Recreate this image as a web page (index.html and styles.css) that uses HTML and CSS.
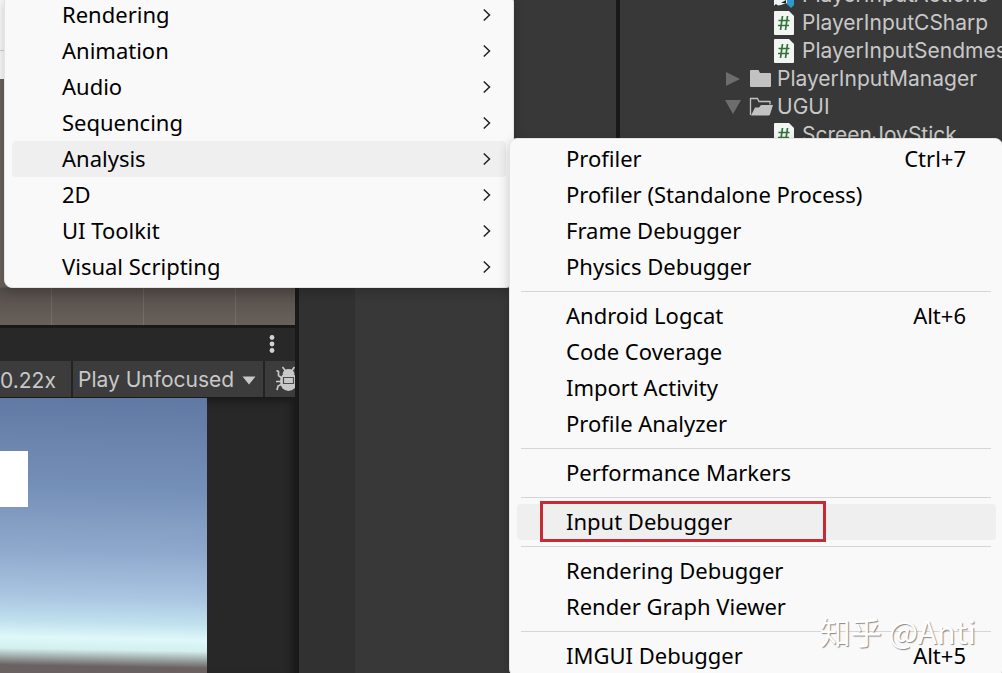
FILE: index.html
```html
<!DOCTYPE html>
<html lang="en">
<head>
<meta charset="utf-8">
<title>Unity Editor</title>
<link rel="stylesheet" href="styles.css">
</head>
<body>
<svg class="symbols" aria-hidden="true">
  <symbol id="chevron" viewBox="0 0 8 14"><path d="M.8 1.500L6.500 7 .8 12.500" fill="none" stroke="#222" stroke-width="1.500"/></symbol>
  <symbol id="script" viewBox="0 0 22 26">
    <path d="M2 1h14l5 5v18a1 1 0 0 1-1 1H2a1 1 0 0 1-1-1V2a1 1 0 0 1 1-1z" fill="#f2f5f2"/>
    <path d="M9.500 6L7.500 20M14.500 6L12.500 20M5.500 10.500h11M5 15.500h11" fill="none" stroke="#2f7338" stroke-width="1.700"/>
  </symbol>
  <symbol id="folder" viewBox="0 0 24 20"><path d="M2 1h7q1 0 1 1l1 2h10q1 0 1 1v12q0 1-1 1H2q-1 0-1-1V2q0-1 1-1z" fill="#c2c2c2"/></symbol>
  <symbol id="folder-open" viewBox="0 0 24 20">
    <path d="M1.500 18V1.500h7l1.500 3h11v3" fill="none" stroke="#c2c2c2" stroke-width="1.300"/>
    <path d="M2 18.500l4-8h4l2-2.500h12l-3 9.500q-.4 1-1.500 1z" fill="#c2c2c2"/>
  </symbol>
</svg>
<main class="editor">
  <section class="left-pane">
    <div class="scene"><div class="scene-top"></div><div class="scene-grid"></div></div>
    <div class="tab-bar">
      <button class="more" aria-label="More options"><svg width="6" height="20" viewBox="0 0 6 20"><g fill="#d2d2d2"><circle cx="3" cy="3.500" r="2.400"/><circle cx="3" cy="10" r="2.400"/><circle cx="3" cy="16.500" r="2.400"/></g></svg></button>
    </div>
    <div class="toolbar">
      <span class="scale">0.22x</span>
      <div class="focus">
        <select aria-label="Play mode focus"><option>Play Unfocused</option></select>
        <svg width="14" height="9" viewBox="0 0 14 9"><path d="M.5.5h13L7 8.500z" fill="#c8c8c8"/></svg>
      </div>
      <button class="bug" aria-label="Debug"><svg width="26" height="26" viewBox="0 0 26 26">
        <path d="M7.500 1l3 4M19.500 1l-3 4M1.500 4.500l2 1v4l4 3M25.500 4.500l-2 1v4l-4 3M1 15.500h6M26 15.500h-6M2 24l1-4 4-2M25 24l-1-4-4-2" fill="none" stroke="#c8c8c8" stroke-width="1.700"/>
        <path d="M7.500 8q1-5 6-5t6 5z" fill="#c8c8c8"/>
        <ellipse cx="13.500" cy="15.500" rx="8.500" ry="9.500" fill="#c8c8c8"/>
        <path d="M8.500 11.500h10v6h-10z" fill="none" stroke="#4c4c4c" stroke-width="1.200"/>
      </svg></button>
    </div>
    <div class="game"><div class="camera"><div class="white-box"></div></div></div>
  </section>
  <section class="middle-pane"><div class="gutter"></div></section>
  <section class="project">
    <ul class="tree">
      <li class="asset child"><svg class="script" viewBox="0 0 22 26"><path d="M1 1h20v20l-4 3-4-3-5 2-7 1z" fill="#eef3f5"/><path d="M8 21l5-3v3zM1 24h4l-2-2z" fill="#222"/><path d="M14 18h7v5l-3 3-4-4z" fill="#2b9ccc"/></svg>PlayerInputActions</li>
      <li class="asset child"><svg class="script"><use href="#script"/></svg>PlayerInputCSharp</li>
      <li class="asset child"><svg class="script"><use href="#script"/></svg>PlayerInputSendmessage</li>
      <li class="asset"><svg class="arrow" viewBox="0 0 16 16"><path d="M1 1l14 7-14 7z" fill="#6d6d6d"/></svg><svg class="folder"><use href="#folder"/></svg>PlayerInputManager</li>
      <li class="asset"><svg class="arrow" viewBox="0 0 16 16"><path d="M0 1h16L8 15z" fill="#6d6d6d"/></svg><svg class="folder"><use href="#folder-open"/></svg>UGUI</li>
      <li class="asset child"><svg class="script"><use href="#script"/></svg>ScreenJoyStick</li>
    </ul>
  </section>
</main>
<nav class="menu window-menu" aria-label="Window">
  <button class="item">Rendering<svg class="chevron"><use href="#chevron"/></svg></button>
  <button class="item">Animation<svg class="chevron"><use href="#chevron"/></svg></button>
  <button class="item">Audio<svg class="chevron"><use href="#chevron"/></svg></button>
  <button class="item">Sequencing<svg class="chevron"><use href="#chevron"/></svg></button>
  <button class="item active">Analysis<svg class="chevron"><use href="#chevron"/></svg></button>
  <button class="item">2D<svg class="chevron"><use href="#chevron"/></svg></button>
  <button class="item">UI Toolkit<svg class="chevron"><use href="#chevron"/></svg></button>
  <button class="item">Visual Scripting<svg class="chevron"><use href="#chevron"/></svg></button>
</nav>
<nav class="menu analysis-menu" aria-label="Analysis">
  <button class="item">Profiler<span>Ctrl+7</span></button>
  <button class="item">Profiler (Standalone Process)</button>
  <button class="item">Frame Debugger</button>
  <button class="item">Physics Debugger</button>
  <hr>
  <button class="item">Android Logcat<span>Alt+6</span></button>
  <button class="item">Code Coverage</button>
  <button class="item">Import Activity</button>
  <button class="item">Profile Analyzer</button>
  <hr>
  <button class="item">Performance Markers</button>
  <hr>
  <button class="item active marked">Input Debugger</button>
  <hr>
  <button class="item">Rendering Debugger</button>
  <button class="item">Render Graph Viewer</button>
  <hr>
  <button class="item">IMGUI Debugger<span>Alt+5</span></button>
</nav>
<div class="watermark" lang="zh">知乎 @Anti</div>
</body>
</html>
```
FILE: styles.css
```css
*, ::after { box-sizing: border-box; }
html, body { height: 100%; }
body {
  margin: 0;
  position: relative;
  overflow: hidden;
  background: #383838;
  color: #c8c8c8;
  font: 21px/28px Inter, "Liberation Sans", sans-serif;
}
button, select {
  margin: 0;
  padding: 0;
  border: 0;
  background: none;
  color: inherit;
  font: inherit;
  appearance: none;
}
svg { flex: none; }
.symbols { position: absolute; width: 0; height: 0; }

.editor {
  display: grid;
  grid-template-columns: 295fr 317fr 382fr;
  gap: 4px;
  height: 100%;
  background: #191919;
}
.left-pane {
  display: flex;
  flex-direction: column;
  min-width: 0;
  overflow: hidden;
}
.scene { flex: none; background: #625a56; }
.scene-top {
  height: 79px;
  background: linear-gradient(#f9f9f9 50px, #cfcfcf 50px, #cfcfcf 51px, #f9f9f9 51px);
}
.scene-grid {
  height: 246px;
  background:
    linear-gradient(transparent 208px, #0003 209px, transparent),
    repeating-linear-gradient(90deg, transparent 0 51px, #79716e 51px 52px, transparent 52px 92px),
    #68605b;
}
.tab-bar {
  flex: none;
  display: flex;
  align-items: center;
  justify-content: flex-end;
  height: 36px;
  padding: 0 20px 2px 0;
  border-top: 3px solid #191919;
  background: #282828;
}
.more, .bug { display: flex; align-items: center; }
.toolbar {
  flex: none;
  display: flex;
  gap: 2px;
  height: 37px;
  border-bottom: 1px solid #191919;
  background: #232323;
}
.scale { width: 71px; padding-top: 6px; background: #3c3c3c; }
.focus {
  display: flex;
  align-items: center;
  justify-content: space-between;
  width: 190px;
  padding: 2px 7px 0 5px;
  background: #3c3c3c;
}
.bug { flex: 1; padding-left: 10px; background: #3c3c3c; overflow: hidden; }
.game {
  flex: 1;
  display: flex;
  background: #282828;
  box-shadow: inset -4px 4px 6px #1b1b1b;
}
.camera {
  width: 70%;
  padding-top: 53px;
  background: linear-gradient(181deg, #6079a2 0, #7590b8 33%, #8fa9cd 56%, #a9c5e1 72%, #c0e0ee 81%, #dff8fa 87%, #d3efee 91%, #8c9291 95%, #6a6262 97%);
}
.white-box { width: 28px; height: 56px; background: #fff; }
.middle-pane { background: #383838; }
.gutter { width: 56px; height: 100%; background: #313131; }
.project { min-width: 0; overflow: hidden; background: #383838; }
.tree { margin: -19px 0 0; padding: 0; list-style: none; }
.asset {
  display: flex;
  align-items: center;
  gap: 4px;
  height: 28px;
  padding-left: 105px;
  white-space: nowrap;
}
.child { gap: 7px; padding-left: 153px; }
.script { width: 22px; height: 26px; }
.arrow { width: 16px; height: 16px; margin-right: 4px; }
.folder { width: 24px; height: 20px; }

.menu {
  position: absolute;
  padding: 2px 7px;
  border: 1px solid #e4e4e4;
  border-radius: 8px;
  background: #f9f9f9;
  box-shadow: 0 4px 12px #0003;
  color: #000;
  font: 22px/28px "Noto Sans", sans-serif;
}
.window-menu { top: -6px; left: 4px; width: 510px; }
.analysis-menu { top: 138px; left: 509px; right: -1px; padding-right: 6px; }
.item {
  position: relative;
  display: flex;
  align-items: center;
  justify-content: space-between;
  width: 100%;
  height: 36px;
  padding: 0 30px 2px 49px;
  border-radius: 4px;
  text-align: left;
  white-space: nowrap;
}
.window-menu .item { padding: 0 15px 2px 50px; }
.active { background: #efefef; }
.chevron { width: 8px; height: 14px; margin-top: 2px; }
.menu hr { margin: 6px 5px 6px 4px; border: 0; border-top: 1px solid #d5d5d5; }
.marked::after {
  content: "";
  position: absolute;
  left: 23px;
  top: -3px;
  width: 286px;
  height: 41px;
  border: 3px solid #c62a33;
}
.watermark {
  position: absolute;
  right: 26px;
  bottom: 22px;
  color: #fff;
  font: 31px/40px "Noto Sans CJK SC", sans-serif;
  text-shadow: 1px 1px 1px #888;
}
```
